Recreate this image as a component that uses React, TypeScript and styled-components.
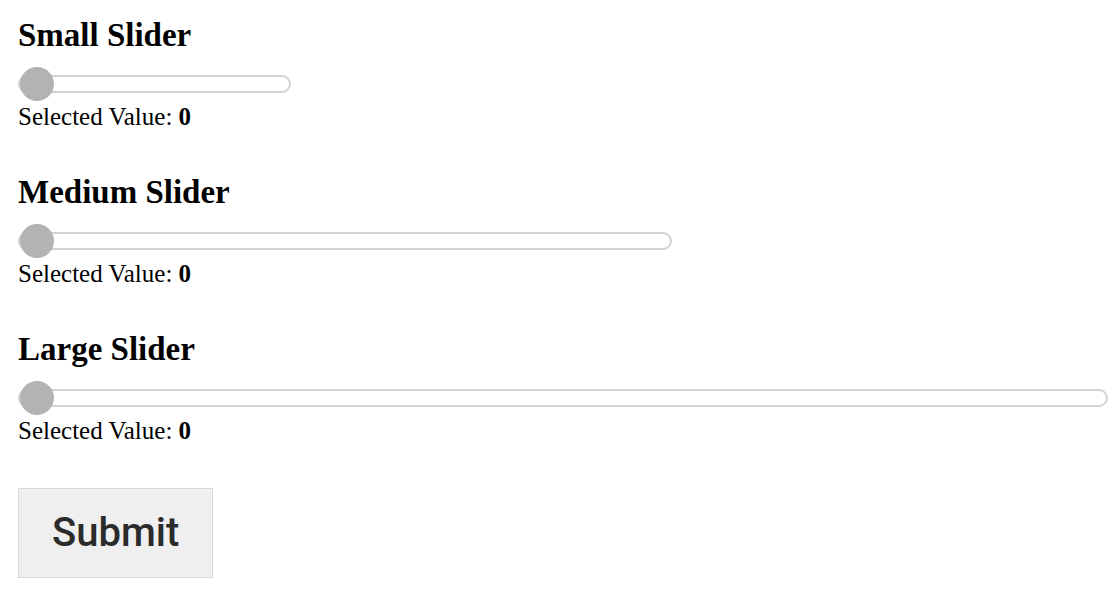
import { useState } from 'react';
import styled, { createGlobalStyle } from 'styled-components';

const GlobalStyle = createGlobalStyle`
  body {
    margin: 0;
    background: #fff;
    color: #000;
    font-family: "Liberation Serif", "Times New Roman", serif;
  }
`;

const Page = styled.form`
  display: flex;
  flex-direction: column;
  align-items: flex-start;
  padding: 16px 8px 0 18px;
`;

const Section = styled.section`
  width: 100%;
  display: flex;
  flex-direction: column;
  margin-bottom: 42px;
`;

const Heading = styled.h2`
  margin: 0 0 13px;
  font-size: 33px;
  line-height: 38px;
  font-weight: 700;
`;

type RangeProps = {
  $width: string;
};

const Range = styled.input<RangeProps>`
  -webkit-appearance: none;
  appearance: none;
  width: ${({ $width }) => $width};
  height: 34px;
  margin: 0;
  padding: 0;
  background: transparent;
  cursor: pointer;

  &::-webkit-slider-runnable-track {
    height: 18px;
    box-sizing: border-box;
    border: 2px solid #d2d2d2;
    border-radius: 9px;
    background: #fff;
  }

  &::-webkit-slider-thumb {
    -webkit-appearance: none;
    appearance: none;
    width: 34px;
    height: 34px;
    margin-top: -10px;
    border: none;
    border-radius: 50%;
    background: #b3b3b3;
  }

  &::-moz-range-track {
    height: 14px;
    border: 2px solid #d2d2d2;
    border-radius: 9px;
    background: #fff;
  }

  &::-moz-range-thumb {
    width: 34px;
    height: 34px;
    border: none;
    border-radius: 50%;
    background: #b3b3b3;
  }
`;

const ValueText = styled.p`
  margin: 2px 0 0;
  font-size: 25px;
  line-height: 28px;

  strong {
    font-weight: 700;
  }
`;

const SubmitButton = styled.button`
  margin-top: 1px;
  padding: 20px 33px;
  font-family: Roboto, "Liberation Sans", Arial, sans-serif;
  font-size: 40px;
  font-weight: 500;
  line-height: 48px;
  color: #2b2b2b;
  background: #efefef;
  border: 1px solid #d8d8d8;
  border-radius: 0;
  cursor: pointer;
`;

type SliderProps = {
  label: string;
  width: string;
};

const Slider = ({ label, width }: SliderProps): JSX.Element => {
  const [value, setValue] = useState<number>(0);

  return (
    <Section>
      <Heading>{label}</Heading>
      <Range
        type="range"
        min={0}
        max={100}
        value={value}
        $width={width}
        onChange={(e) => setValue(Number(e.target.value))}
      />
      <ValueText>
        Selected Value: <strong>{value}</strong>
      </ValueText>
    </Section>
  );
};

const App = (): JSX.Element => (
  <>
    <GlobalStyle />
    <Page onSubmit={(e) => e.preventDefault()}>
      <Slider label="Small Slider" width="25%" />
      <Slider label="Medium Slider" width="60%" />
      <Slider label="Large Slider" width="100%" />
      <SubmitButton type="submit">Submit</SubmitButton>
    </Page>
  </>
);

export default App;
